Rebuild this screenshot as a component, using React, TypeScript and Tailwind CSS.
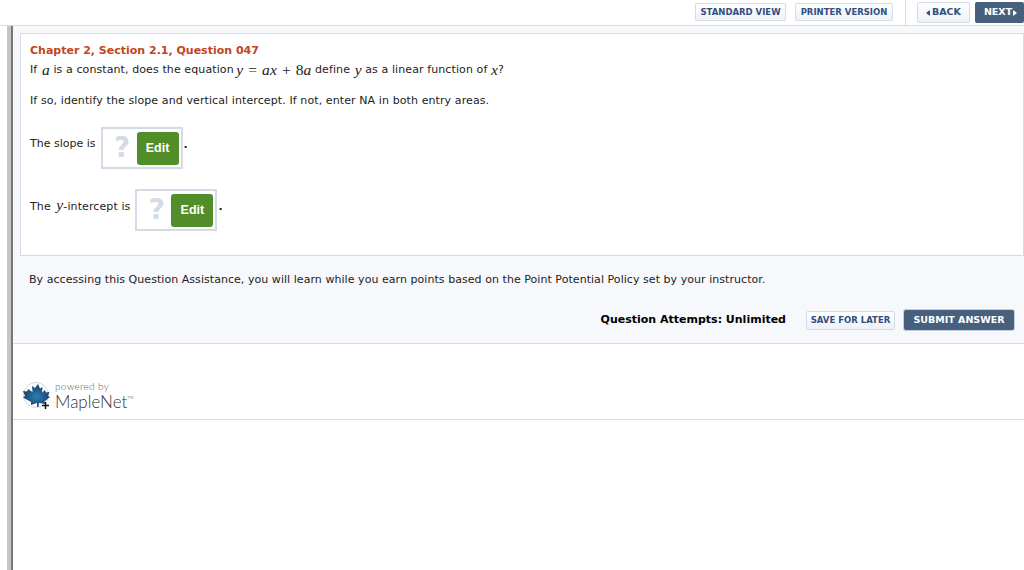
import { ReactNode } from "react";

const serif = "font-['Liberation_Serif',serif] text-[15.5px]";
const lightBtn = "rounded-[2px] border border-[#d5dbe6] bg-gradient-to-b from-white to-[#eef1f6] font-bold text-[#2f4f80] whitespace-nowrap";

function Var({ children, className = "" }: { children: ReactNode; className?: string }) {
  return <i className={`${serif} ${className}`}>{children}</i>;
}

function AnswerBox() {
  return (
    <span className="inline-flex h-[42px] w-[82px] items-center border-2 border-[#d5dbe6] bg-white pl-[11px]">
      <span className="w-[17px] text-center text-[28px] leading-none font-bold text-[#d5dbe6]">?</span>
      <span className="ml-[6px] flex h-[33px] w-[42px] items-center justify-center rounded-[3px] bg-[#518e2a] text-[12.5px] font-bold text-white font-['Liberation_Sans',sans-serif]">
        Edit
      </span>
    </span>
  );
}

function MapleLogo() {
  return (
    <svg width="28" height="28" viewBox="0 0 28 28">
      <defs>
        <radialGradient id="leaf" cx="50%" cy="55%" r="55%">
          <stop offset="0%" stopColor="#2f7db5" />
          <stop offset="100%" stopColor="#123f66" />
        </radialGradient>
      </defs>
      <circle cx="14" cy="14" r="12.5" fill="#fff" stroke="#d8d8d8" />
      <path
        d="M16 3L18 7.500L20.500 6L20 11.500L23 9L24 11.500L27.500 11L26 15L28 16L22.500 20.500L23 23L17 22L16.500 26L15 26L15 22L9 24L9 21L1 16.500L3 15L1 10L5 10.500L6 8L10.500 11L10 5L13 7Z"
        fill="url(#leaf)"
      />
      <path d="M20 24.500H27M23.500 21V28" stroke="#111" strokeWidth="1.500" />
    </svg>
  );
}

export default function App() {
  return (
    <div className="min-h-[570px] bg-white font-['DejaVu_Sans',sans-serif] text-[11px] text-[#222]">
      {/* Top toolbar */}
      <div className="flex h-[26px] items-start justify-end border-b border-[#d5dbe6]">
        <div className="flex h-[25px] items-start gap-[9px] border-r border-[#d5dbe6] pt-[3px] pr-[12px]">
          <button className={`${lightBtn} h-[18px] w-[91px] text-[8.500px]`}>STANDARD VIEW</button>
          <button className={`${lightBtn} h-[18px] w-[98px] text-[8.500px]`}>PRINTER VERSION</button>
        </div>
        <div className="flex items-start gap-[5px] pt-[2px] pl-[11px]">
          <button className={`${lightBtn} flex h-[21px] w-[53px] items-center justify-center gap-[2px] text-[9.500px]`}>
            <span className="h-0 w-0 border-y-[3.500px] border-r-[4px] border-y-transparent border-r-[#2f4f80]" />
            BACK
          </button>
          <button className="flex h-[21px] w-[49px] items-center justify-center gap-[1px] rounded-[2px] bg-[#46607e] pl-[2px] text-[9.500px] font-bold text-white">
            NEXT
            <span className="h-0 w-0 border-y-[3.500px] border-l-[4px] border-y-transparent border-l-white" />
          </button>
        </div>
      </div>

      <div className="flex min-h-[544px]">
        <div className="ml-[7px] w-[6px] shrink-0 border-r-2 border-[#777] bg-[#c6c6c6]" />
        <div className="min-w-0 flex-1">
          {/* Question area */}
          <div className="border-b border-[#d5dbe6] bg-[#f7f8fb] pt-[7px] pb-[13px]">
            <div className="ml-[7px] h-[223px] border border-[#d5dbe6] bg-white pt-[9px] pl-[9px]">
              <h1 className="text-[11px] leading-[15px] font-bold text-[#c4451c]">Chapter 2, Section 2.1, Question 047</h1>
              <p className="mt-[4px] flex h-[16px] items-center tracking-[0.1px] whitespace-pre">
                If <Var className="ml-[1px]">a</Var> is a constant, does the equation <span className={`${serif} -ml-[1px] [word-spacing:1px]`}><i>y</i> = <i>ax</i> + 8<i>a</i></span> define <Var className="ml-[1px]">y</Var> as a linear function of <Var>x</Var>?
              </p>
              <p className="mt-[15px] leading-[16px] tracking-[0.1px]">If so, identify the slope and vertical intercept. If not, enter NA in both entry areas.</p>
              <div className="mt-[18px] flex items-start">
                <span className="mt-[9px] mr-[5px] leading-[16px]">The slope is</span>
                <AnswerBox />
                <span className="mt-[10px] ml-[1px] font-bold">.</span>
              </div>
              <div className="mt-[20px] flex items-start whitespace-pre">
                <span className="mt-[8px] mr-[5px] leading-[16px] tracking-[0.1px]">The <Var className="ml-[2px]">y</Var>-intercept is</span>
                <AnswerBox />
                <span className="mt-[10px] ml-[1px] font-bold">.</span>
              </div>
            </div>
            <p className="mt-[16px] ml-[16px] leading-[16px] tracking-[0.05px]">
              By accessing this Question Assistance, you will learn while you earn points based on the Point Potential Policy set by your instructor.
            </p>
            <div className="mt-[22px] flex items-center justify-end pr-[10px]">
              <span className="mr-[20px] text-[11px] font-bold text-black">Question Attempts: Unlimited</span>
              <button className={`${lightBtn} mr-[9px] h-[19px] w-[89px] text-[8.500px]`}>
                SAVE FOR LATER
              </button>
              <button className="h-[20px] w-[110px] rounded-[2px] bg-[#46607e] text-[9.500px] font-bold whitespace-nowrap text-white shadow-[0_0_0_1px_#c3cddb]">
                SUBMIT ANSWER
              </button>
            </div>
          </div>

          {/* Footer */}
          <div className="flex h-[76px] items-start border-b border-[#d5dbe6] pt-[37px] pl-[9px]">
            <MapleLogo />
            <div className="ml-[5px] -mt-[1px] font-['Lato',sans-serif] font-light">
              <div className="text-[10px] leading-[12px] tracking-[0.3px] text-[#666]">powered by</div>
              <div className="flex items-start text-[17px] leading-[20px] text-[#333]">
                MapleNet
                <span className="mt-[4px] text-[4px] leading-none">TM</span>
              </div>
            </div>
          </div>
        </div>
      </div>
    </div>
  );
}
